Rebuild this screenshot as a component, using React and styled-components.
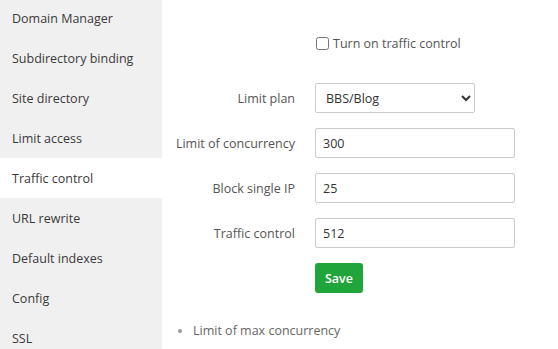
import React from "react";
import styled, { createGlobalStyle } from "styled-components";

const GlobalStyle = createGlobalStyle`
  html, body {
    margin: 0;
    padding: 0;
    background: #fff;
    font-family: "Open Sans", "Noto Sans", sans-serif;
    font-size: 12px;
    color: #333;
    overflow: hidden;
  }
`;

const menu = [
  "Domain Manager",
  "Subdirectory binding",
  "Site directory",
  "Limit access",
  "Traffic control",
  "URL rewrite",
  "Default indexes",
  "Config",
  "SSL",
];

const Layout = styled.div`
  display: flex;
  width: 558px;
  height: 349px;
  overflow: hidden;
`;

const Sidebar = styled.ul`
  width: 162px;
  flex-shrink: 0;
  margin: 0;
  padding: 0;
  list-style: none;
  background: #f0f0f0;
  height: 100%;
`;

const MenuItem = styled.li`
  height: 40px;
  line-height: 42px;
  padding-left: 12px;
  font-size: 12.5px;
  color: #3a3a3a;
  background: ${(p) => (p.$active ? "#fff" : "transparent")};
  &:first-child {
    margin-top: -2px;
  }
`;

const Content = styled.div`
  flex: 1;
  padding-top: 28px;
`;

const Row = styled.div`
  display: flex;
  align-items: center;
  height: 30px;
  margin-bottom: ${(p) => p.$gap ?? 15}px;
`;

const Label = styled.label`
  width: 133px;
  margin-right: 20px;
  text-align: right;
  color: #555;
  font-size: 12.5px;
`;

const CheckLabel = styled.label`
  display: flex;
  align-items: center;
  color: #555;
  font-size: 12.5px;
  input {
    margin: 0 4px 0 1px;
    width: 13px;
    height: 13px;
  }
`;

const Select = styled.select`
  width: 160px;
  height: 30px;
  border: 1px solid #ccc;
  border-radius: 2px;
  padding: 0 6px;
  font-family: inherit;
  font-size: 12.5px;
  color: #333;
  background: #fff;
`;

const Input = styled.input`
  width: 200px;
  height: 30px;
  box-sizing: border-box;
  border: 1px solid #ccc;
  border-radius: 2px;
  padding: 0 7px;
  font-family: inherit;
  font-size: 12.5px;
  color: #333;
  outline: none;
`;

const SaveButton = styled.button`
  width: 48px;
  height: 30px;
  border: none;
  border-radius: 3px;
  background: #20a53a;
  color: #fff;
  font-family: inherit;
  font-size: 12.5px;
  font-weight: 600;
  cursor: pointer;
`;

const Tips = styled.ul`
  margin: 28px 0 0;
  padding-left: 31px;
  color: #666;
  font-size: 12.5px;
  li {
    line-height: 20px;
  }
  li::marker {
    color: #999;
  }
`;

export default function App() {
  return (
    <>
      <GlobalStyle />
      <Layout>
        <Sidebar>
          {menu.map((m) => (
            <MenuItem key={m} $active={m === "Traffic control"}>
              {m}
            </MenuItem>
          ))}
        </Sidebar>
        <Content>
          <Row $gap={25}>
            <Label />
            <CheckLabel>
              <input type="checkbox" />
              Turn on traffic control
            </CheckLabel>
          </Row>
          <Row>
            <Label>Limit plan</Label>
            <Select defaultValue="bbs">
              <option value="bbs">BBS/Blog</option>
              <option value="img">Image site</option>
              <option value="dl">Download site</option>
            </Select>
          </Row>
          <Row>
            <Label>Limit of concurrency</Label>
            <Input defaultValue="300" />
          </Row>
          <Row>
            <Label>Block single IP</Label>
            <Input defaultValue="25" />
          </Row>
          <Row>
            <Label>Traffic control</Label>
            <Input defaultValue="512" />
          </Row>
          <Row $gap={0}>
            <Label />
            <SaveButton>Save</SaveButton>
          </Row>
          <Tips>
            <li>Limit of max concurrency</li>
          </Tips>
        </Content>
      </Layout>
    </>
  );
}
